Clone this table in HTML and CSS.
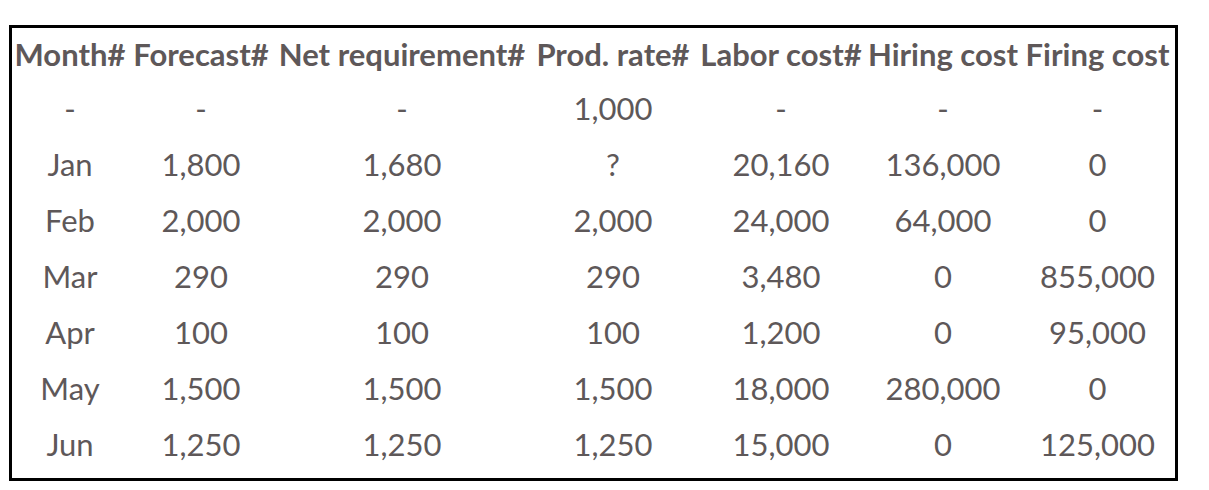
FILE: index.html
```html
<!DOCTYPE html>
<html>
<head>
<meta charset="utf-8">
<link rel="stylesheet" href="styles.css">
</head>
<body>
<div class="frame">
<table class="plan">
<colgroup>
<col class="c1"><col class="c2"><col class="c3"><col class="c4"><col class="c5"><col class="c6"><col class="c7">
</colgroup>
<thead>
<tr><th>Month#</th><th>Forecast#</th><th>Net requirement#</th><th>Prod. rate#</th><th>Labor cost#</th><th>Hiring cost</th><th>Firing cost</th></tr>
</thead>
<tbody>
<tr><td>-</td><td>-</td><td>-</td><td>1,000</td><td>-</td><td>-</td><td>-</td></tr>
<tr><td>Jan</td><td>1,800</td><td>1,680</td><td>?</td><td>20,160</td><td>136,000</td><td>0</td></tr>
<tr><td>Feb</td><td>2,000</td><td>2,000</td><td>2,000</td><td>24,000</td><td>64,000</td><td>0</td></tr>
<tr><td>Mar</td><td>290</td><td>290</td><td>290</td><td>3,480</td><td>0</td><td>855,000</td></tr>
<tr><td>Apr</td><td>100</td><td>100</td><td>100</td><td>1,200</td><td>0</td><td>95,000</td></tr>
<tr><td>May</td><td>1,500</td><td>1,500</td><td>1,500</td><td>18,000</td><td>280,000</td><td>0</td></tr>
<tr><td>Jun</td><td>1,250</td><td>1,250</td><td>1,250</td><td>15,000</td><td>0</td><td>125,000</td></tr>
</tbody>
</table>
</div>
</body>
</html>
```
FILE: styles.css
```css
html, body {
  margin: 0;
  padding: 0;
  background: #ffffff;
}
body {
  font-family: Lato, "Open Sans", sans-serif;
  color: #5e5859;
}
.frame {
  margin: 25px 0 0 9px;
  width: 1169px;
  box-sizing: border-box;
  border: 3px solid #000000;
  padding-bottom: 6px;
}
.plan {
  border-collapse: collapse;
  table-layout: fixed;
  width: 1163px;
}
.c1 { width: 116px; }
.c2 { width: 146px; }
.c3 { width: 256px; }
.c4 { width: 166px; }
.c5 { width: 170px; }
.c6 { width: 154px; }
.c7 { width: 155px; }
.plan th {
  font-weight: 700;
  font-size: 31px;
  height: 52px;
  padding: 0;
  white-space: nowrap;
  text-align: center;
  vertical-align: middle;
}
.plan td {
  font-size: 31px;
  height: 56px;
  padding: 0;
  text-align: center;
  vertical-align: middle;
  white-space: nowrap;
}
```
